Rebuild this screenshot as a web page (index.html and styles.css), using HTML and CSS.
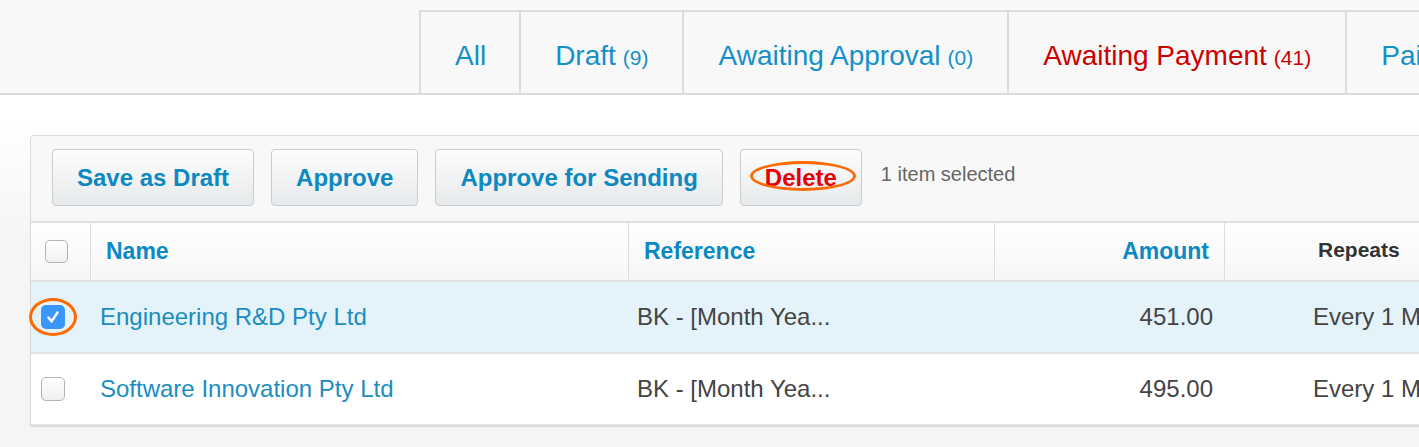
FILE: index.html
```html
<!DOCTYPE html>
<html lang="en">
<head>
    <meta charset="UTF-8">
    <title>Repeating Invoices</title>
    <link rel="stylesheet" href="styles.css">
</head>
<body>

<div class="tabbar">
    <div class="tab">All</div>
    <div class="tab">Draft <span class="count">(9)</span></div>
    <div class="tab">Awaiting Approval <span class="count">(0)</span></div>
    <div class="tab active">Awaiting Payment <span class="count">(41)</span></div>
    <div class="tab">Paid</div>
</div>

<div class="main">
    <div class="panel">
        <div class="toolbar">
            <button type="button" class="btn">Save as Draft</button>
            <button type="button" class="btn">Approve</button>
            <button type="button" class="btn">Approve for Sending</button>
            <button type="button" class="btn btn-delete">Delete<span class="ring ring-delete"></span></button>
            <span class="selected-info">1 item selected</span>
        </div>

        <div class="grid head">
            <div class="cell check"><span class="box"></span></div>
            <div class="cell">Name</div>
            <div class="cell">Reference</div>
            <div class="cell right">Amount</div>
            <div class="cell repeats">Repeats</div>
        </div>

        <div class="grid row selected">
            <div class="cell check">
                <span class="box checked">
                    <svg width="16" height="16" viewBox="0 0 16 16"><path d="M3.5 8.5 L6.5 12.5 L12.5 3.5" fill="none" stroke="#fff" stroke-width="2.4" stroke-linecap="round" stroke-linejoin="round"/></svg>
                    <span class="ring ring-check"></span>
                </span>
            </div>
            <div class="cell name">Engineering R&amp;D Pty Ltd</div>
            <div class="cell">BK - [Month Yea...</div>
            <div class="cell right">451.00</div>
            <div class="cell every">Every 1 Month</div>
        </div>

        <div class="grid row">
            <div class="cell check"><span class="box"></span></div>
            <div class="cell name">Software Innovation Pty Ltd</div>
            <div class="cell">BK - [Month Yea...</div>
            <div class="cell right">495.00</div>
            <div class="cell every">Every 1 Month</div>
        </div>
    </div>
</div>

</body>
</html>
```

FILE: styles.css
```css
body {
    margin: 0;
    padding: 0;
    width: 1419px;
    height: 447px;
    overflow: hidden;
    font-family: 'Liberation Sans', Arial, sans-serif;
    background: #f5f5f5;
}

/* top tabs */
.tabbar {
    display: flex;
    height: 83px;
    padding: 10px 0 0 419px;
    background: #f8f8f8;
    border-bottom: 2px solid #d9dcde;
    white-space: nowrap;
}

.tab {
    display: flex;
    align-items: center;
    padding: 7px 34px 0 34px;
    border-top: 2px solid #dcdcdc;
    border-left: 2px solid #dcdcdc;
    color: #1490c8;
    font-size: 28px;
}

.tab:first-child {
    padding: 7px 33px 0 34px;
}

.tab .count {
    font-size: 21px;
    margin-left: 7px;
    padding-top: 3px;
}

.tab.active {
    color: #cc0000;
}

/* main area */
.main {
    padding: 40px 0 0 30px;
    background: linear-gradient(to bottom, #ffffff 0, #ffffff 30px, #f5f5f5 140px);
    height: 400px;
}

.panel {
    width: 1600px;
    border: 1px solid #d9d9d9;
    border-radius: 4px 0 0 0;
    background: #fff;
}

.toolbar {
    display: flex;
    align-items: center;
    gap: 17px;
    padding: 13px 0 15px 21px;
    background: #f8f8f8;
    border-bottom: 2px solid #e0e0e0;
    border-radius: 4px 0 0 0;
}

.btn {
    position: relative;
    height: 57px;
    padding: 0 24px;
    border: 1px solid #c9cdd0;
    border-radius: 4px;
    background: linear-gradient(to bottom, #fdfdfd, #e6e9eb);
    color: #0d89c2;
    font-family: 'Liberation Sans', Arial, sans-serif;
    font-size: 24px;
    font-weight: bold;
    cursor: pointer;
}

.btn-delete {
    color: #e40000;
}

.selected-info {
    margin-left: 2px;
    margin-top: -6px;
    color: #666;
    font-size: 20px;
}

/* orange annotation rings */
.ring {
    position: absolute;
    box-sizing: border-box;
    border: 3px solid #ff6a00;
    border-radius: 50%;
}

.ring-delete {
    left: 9px;
    top: 11px;
    width: 106px;
    height: 30px;
}

.ring-check {
    left: -12px;
    top: -7px;
    width: 48px;
    height: 38px;
}

/* table */
.grid {
    display: grid;
    grid-template-columns: 59px 538px 366px 230px 300px;
}

.head {
    height: 57px;
    background: linear-gradient(to bottom, #ffffff, #f6f6f6);
    border-bottom: 2px solid #e0e0e0;
}

.head .cell {
    border-left: 1px solid #dddddd;
    padding: 0 15px;
    color: #0b89c3;
    font-size: 23px;
    font-weight: bold;
}

.head .cell.check {
    border-left: none;
    padding: 0 0 0 14px;
}

.head .cell.repeats {
    padding-left: 93px;
    color: #333;
    font-size: 21px;
    padding-bottom: 4px;
}

.cell {
    display: flex;
    align-items: center;
    white-space: nowrap;
}

.cell.right {
    justify-content: flex-end;
}

.row {
    height: 70px;
    border-bottom: 2px solid #e2e2e2;
    font-size: 24px;
    color: #444;
}

.row.selected {
    background: #e4f3f9;
}

.row .cell {
    padding: 0 9px;
}

.row .cell.check {
    padding: 0 0 0 10px;
}

.row .cell.name {
    padding-left: 10px;
    color: #1b8dc1;
}

.row .cell.right {
    padding-right: 11px;
}

.row .cell.every {
    padding-left: 89px;
}

/* checkboxes */
.box {
    position: relative;
    display: flex;
    align-items: center;
    justify-content: center;
    box-sizing: border-box;
    width: 23px;
    height: 23px;
    border: 1px solid #b4b4b4;
    border-radius: 5px;
    background: linear-gradient(to bottom, #ffffff, #f0f0f0);
}

.row .box {
    width: 24px;
    height: 24px;
}

.box.checked {
    border: none;
    background: #3a96f8;
}
```
